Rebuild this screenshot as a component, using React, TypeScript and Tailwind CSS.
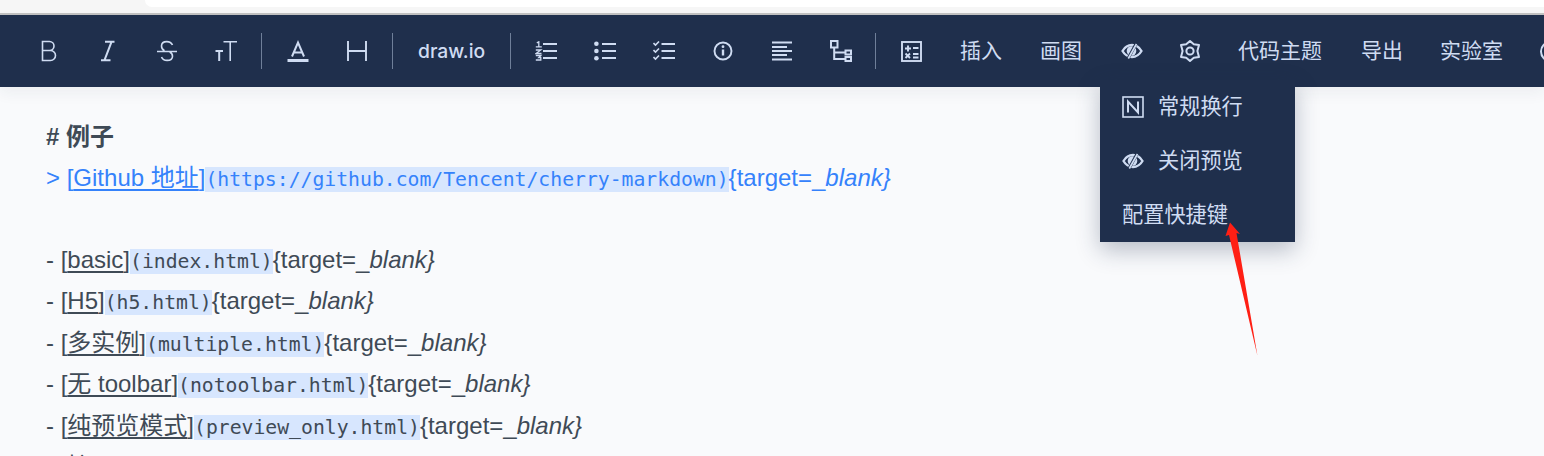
import React from "react";

const sans = "font-['Liberation_Sans','Noto_Sans_CJK_SC',sans-serif]";
const u = "underline underline-offset-[3px] decoration-2";

const Eye = ({ bg = "#1f2f4c" }: { bg?: string }) => (
  <svg width="22" height="22" viewBox="0 0 22 22" fill="none" stroke="currentColor" className="block shrink-0">
    <path d="M1.500 11C3.800 7 7 5 11 5s7.200 2 9.500 6c-2.300 4-5.500 6-9.500 6S3.800 15 1.500 11z" strokeWidth="2.300" />
    <circle cx="10.500" cy="11" r="4.800" fill="currentColor" stroke="none" />
    <path d="M6.500 19.500L15.500 3" stroke={bg} strokeWidth="3" />
    <path d="M7.300 18.500L15.500 4" strokeWidth="1.700" />
  </svg>
);

function Sep({ className }: { className: string }) {
  return <span className={`w-px h-9 bg-[#6f7f99] shrink-0 ${className}`} />;
}

function Cell({ children, className = "w-[59px]" }: { children: React.ReactNode; className?: string }) {
  return <span className={`flex items-center justify-center shrink-0 h-full ${className}`}>{children}</span>;
}

function Row({ c, head, blue }: { c: string; head: React.ReactNode; blue?: boolean }) {
  return (
    <div className={`h-[41.5px] leading-[41.5px] whitespace-nowrap ${blue ? "text-[#3582fb]" : "text-[#3f4a56]"}`}>
      {head}
      <span className="bg-[#d7e6fe] inline-block h-[25px] leading-[25px] font-['DejaVu_Sans_Mono',monospace] text-[19.750px]">
        {c}
      </span>
      <span>{"{target=_"}</span>
      <i>{"blank}"}</i>
    </div>
  );
}

export default function App() {
  return (
    <div className={`relative w-[1544px] h-[456px] overflow-hidden bg-[#f9fafc] ${sans}`}>
      <div className="h-[13px] bg-[#f6f6f6] overflow-hidden">
        <div className="ml-[145px] h-[7px] bg-white rounded-bl-[14px]" />
      </div>
      <div className="h-[2px] bg-[#c2c2c2]" />
      <div className="h-[72px] bg-[#1f2f4c] text-[#cfdcf2] flex items-center overflow-hidden shadow-[0_6px_14px_rgba(31,47,76,0.06)] relative pl-[19px] text-[21px] whitespace-nowrap">
        <Cell>
          <svg width="24" height="24" viewBox="0 0 24 24" fill="none" stroke="currentColor" strokeWidth="1.600" className="block">
            <path d="M5.500 2.500h7a4.500 4.500 0 0 1 0 9h-7zM5.500 11.500h8a5 5 0 0 1 0 10h-8z" />
          </svg>
        </Cell>
        <Cell>
          <svg width="24" height="24" viewBox="0 0 24 24" fill="none" stroke="currentColor" strokeWidth="2" className="block">
            <path d="M9 2.800h9.500M5 21.200h9.500M15.500 2.800L8.500 21.200" />
          </svg>
        </Cell>
        <Cell>
          <svg width="24" height="24" viewBox="0 0 24 24" fill="none" stroke="currentColor" strokeWidth="1.600" className="block">
            <path d="M2 12.500h20M17.500 6c-1-2.200-3-3.400-5.700-3.400-3.300 0-5.300 1.900-5.300 4.500 0 2 1 3.700 3 4.700M6.500 18c1 2.300 3 3.400 5.600 3.400 3.300 0 5.400-1.700 5.400-4.200 0-1.800-.8-3.300-2.800-4.200" />
          </svg>
        </Cell>
        <Cell>
          <svg width="24" height="24" viewBox="0 0 24 24" fill="none" stroke="currentColor" strokeWidth="1.600" className="block">
            <path d="M9.500 2.800H23M16.200 2.800V22" />
            <path d="M1.500 12h7.500M5.200 12v10" strokeWidth="2" />
          </svg>
        </Cell>
        <Sep className="ml-[6px]" />
        <Cell className="w-[59px] ml-[6px]">
          <svg width="24" height="24" viewBox="0 0 24 24" fill="none" stroke="currentColor" className="block">
            <path d="M6 17.500L12 3.500 18 17.500M7.800 13.500h8.400" strokeWidth="2" />
            <path d="M1.500 21.500h21" strokeWidth="3" />
          </svg>
        </Cell>
        <Cell>
          <svg width="24" height="24" viewBox="0 0 24 24" fill="none" stroke="currentColor" strokeWidth="1.900" className="block">
            <path d="M3 2v20M21 2v20M3 12h18" />
          </svg>
        </Cell>
        <Sep className="ml-[6px]" />
        <span className="w-[66px] ml-[25px] shrink-0 text-[19.300px] font-['Inter',sans-serif] font-medium">draw.io</span>
        <Sep className="ml-[26px]" />
        <Cell className="w-[59px] ml-[5px]">
          <svg width="22" height="20" viewBox="0 0 22 20" fill="none" stroke="currentColor" strokeWidth="2" className="block">
            <path d="M8 3h14M8 10h14M8 17h14" />
            <path d="M1.800 1.800L3.800 .8v5M.8 5.800h6M.8 9h5L1 12.500h5.500M.8 14.500h5l-2 2h2v2.500h-5" strokeWidth="1.300" />
          </svg>
        </Cell>
        <Cell>
          <svg width="22" height="20" viewBox="0 0 22 20" fill="none" stroke="currentColor" strokeWidth="2" className="block">
            <path d="M8 3h14M8 10h14M8 17h14" />
            <circle cx="2.400" cy="2.800" r="2.300" fill="currentColor" stroke="none" />
            <circle cx="2.400" cy="10" r="2.300" fill="currentColor" stroke="none" />
            <circle cx="2.400" cy="17.200" r="2.300" fill="currentColor" stroke="none" />
          </svg>
        </Cell>
        <Cell>
          <svg width="22" height="20" viewBox="0 0 22 20" fill="none" stroke="currentColor" strokeWidth="2" className="block">
            <path d="M8.500 3h13.500M8.500 10h13.500M8.500 17h13.500" />
            <path d="M.5 2l2 2 3.500-3.500M.5 9l2 2 3.500-3.500M.5 16l2 2 3.500-3.500" strokeWidth="1.600" />
          </svg>
        </Cell>
        <Cell>
          <svg width="20" height="20" viewBox="0 0 20 20" fill="none" stroke="currentColor" strokeWidth="1.900" className="block">
            <circle cx="10" cy="10" r="8.500" />
            <path d="M10 8.500v6" strokeWidth="2.400" />
            <circle cx="10" cy="5.700" r="1.400" fill="currentColor" stroke="none" />
          </svg>
        </Cell>
        <Cell>
          <svg width="20" height="20" viewBox="0 0 20 20" fill="none" stroke="currentColor" strokeWidth="2" className="block">
            <path d="M0 1.500h20M0 6h15M0 10h20M0 14h15M0 18.500h20" />
          </svg>
        </Cell>
        <Cell>
          <svg width="22" height="22" viewBox="0 0 22 22" fill="none" stroke="currentColor" strokeWidth="2" className="block">
            <rect x="1" y="1" width="6.500" height="6.500" />
            <rect x="15.500" y="10.500" width="5.500" height="4" />
            <rect x="15.500" y="17" width="5.500" height="4" />
            <path d="M4.200 7.500v11.500h11.300M4.200 12.500h11.300" />
          </svg>
        </Cell>
        <Sep className="ml-[5px]" />
        <Cell className="w-[59px] ml-[6px]">
          <svg width="21" height="21" viewBox="0 0 21 21" fill="none" stroke="currentColor" strokeWidth="1.900" className="block">
            <rect x="1" y="1" width="19" height="19" />
            <path d="M4 7.500h6M7 4.500v6M12 7h5.500" />
            <path d="M4.500 12.500l4.500 4.500M9 12.500l-4.500 4.500M12 13h5.500M12 16.500h5.500" />
          </svg>
        </Cell>
        <span className="w-[42px] ml-[19px] shrink-0">插入</span>
        <span className="w-[42px] ml-[38px] shrink-0">画图</span>
        <Cell className="w-[59px] ml-[20px]">
          <Eye />
        </Cell>
        <Cell className="w-[58px]">
          <svg width="24" height="24" viewBox="0 0 24 24" fill="none" stroke="currentColor" strokeWidth="2" strokeLinejoin="round" className="block">
            <path d="M12 2l3.800 3.300 5.200.7-1.600 6 1.600 6-5.200.7-3.800 3.300-3.800-3.300L3 18l1.600-6L3 6l5.200-.7z" />
            <circle cx="12" cy="12" r="3.600" />
          </svg>
        </Cell>
        <span className="w-[85px] ml-[19px] shrink-0">代码主题</span>
        <span className="w-[42px] ml-[38px] shrink-0">导出</span>
        <span className="w-[63px] ml-[37px] shrink-0">实验室</span>
        <span className="w-[21px] h-[21px] ml-[37px] shrink-0 border-2 border-[#cfdcf2] rounded-full" />
      </div>

      <div className="pt-[28px] pl-[46px] text-[24px]">
        <div className="h-[41.5px] leading-[43.5px] font-bold text-[#3f4a56]"># 例子</div>
        <Row
          blue
          c="(https://github.com/Tencent/cherry-markdown)"
          head={
            <>
              {"> ["}
              <span className={u}>Github 地址</span>]
            </>
          }
        />
        <div className="h-[40.5px]" />
        <Row c="(index.html)" head={<>- [<span className={u}>basic</span>]</>} />
        <Row c="(h5.html)" head={<>- [<span className={u}>H5</span>]</>} />
        <Row c="(multiple.html)" head={<>- [<span className={u}>多实例</span>]</>} />
        <Row c="(notoolbar.html)" head={<>- [<span className={u}>无 toolbar</span>]</>} />
        <Row c="(preview_only.html)" head={<>- [<span className={u}>纯预览模式</span>]</>} />
        <Row c="(api.html)" head={<>- [<span className={u}>接口</span>]</>} />
      </div>

      <div className="absolute left-[1100px] top-[80px] w-[195px] h-[162px] bg-[#1f2f4c] text-[#cfdcf2] text-[21.200px] shadow-[0_8px_22px_rgba(31,47,76,0.3)] pl-[22px]">
        <div className="h-[54px] flex items-center gap-[14px]">
          <svg width="22" height="22" viewBox="0 0 22 22" fill="none" stroke="currentColor" className="block shrink-0">
            <rect x="1" y="1" width="20" height="20" strokeWidth="1.600" />
            <path d="M6 16.500V5.500l10 11V5.500" strokeWidth="2" />
          </svg>
          <span>常规换行</span>
        </div>
        <div className="h-[54px] flex items-center gap-[14px]">
          <Eye />
          <span>关闭预览</span>
        </div>
        <div className="h-[54px] flex items-center">配置快捷键</div>
      </div>

      <svg width="40" height="140" viewBox="0 0 40 140" className="absolute left-[1220px] top-[220px]">
        <path d="M10 2.500L20 14 16.500 13 37.500 136 9 15 5.500 16z" fill="#ff1f14" />
      </svg>
    </div>
  );
}
